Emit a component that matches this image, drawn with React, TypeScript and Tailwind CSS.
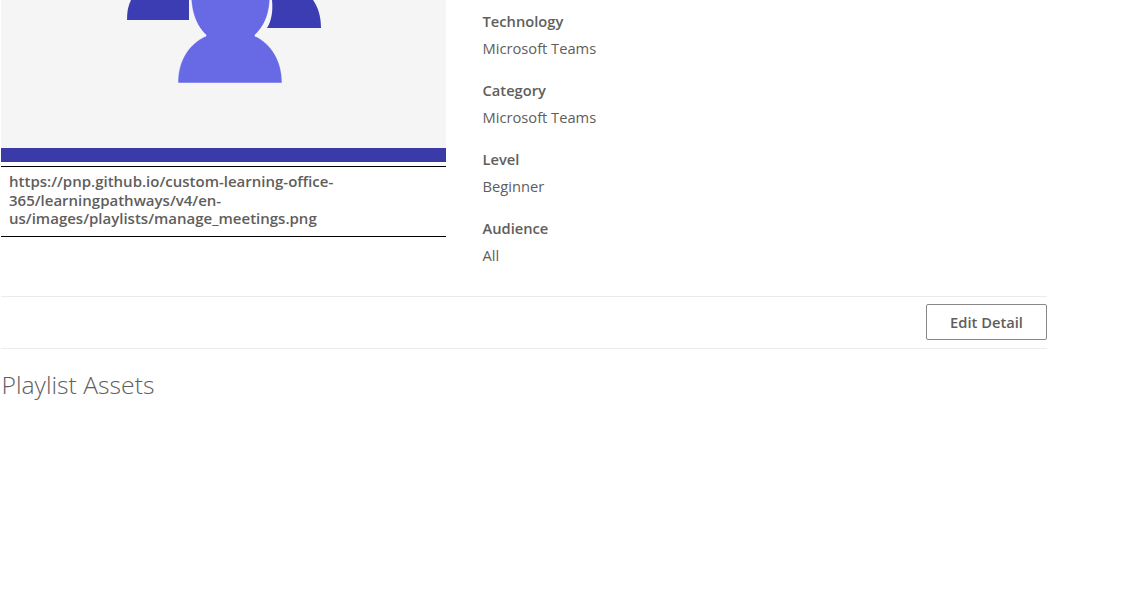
const font = "font-['Open_Sans','Noto_Sans',sans-serif]";

function DetailField({ label, value }: { label: string; value: string }) {
	return (
		<div className="mb-[17px]">
			<div className="h-[25px] text-[14.7px] leading-[25px] font-semibold text-[#605e5c]">{label}</div>
			<div className="h-[27px] pt-[2px] text-[14.7px] leading-[25px] text-[#605e5c]">{value}</div>
		</div>
	);
}

function PlaylistImage() {
	return (
		<svg width="445" height="162" viewBox="0 0 445 162" className="block">
			<rect width="445" height="148" fill="#f5f5f5" />
			<rect y="148" width="445" height="14" fill="#3a3aa8" />
			{/* back shoulders */}
			<path d="M126 20 C126 12 127 6 130 0 L188 0 L188 20 Z" fill="#3d3db3" />
			<path d="M266 28 L320 28 C320 16 317 7 312 0 L271 0 C272 10 271 20 266 28 Z" fill="#3d3db3" />
			{/* front person */}
			<path
				d="M190 -6 C190 14 197 28 205 36 C188 44 177 60 177 83 L281 83 C281 60 270 44 254 36 C263 28 269 14 269 -6 Z"
				fill="#676ae4"
				stroke="#ffffff"
				strokeOpacity="0.55"
				strokeWidth="0.8"
			/>
			<path d="M189 0 C189 14 196 28 205 36" fill="none" stroke="#f5f5f5" strokeWidth="2" />
			<path d="M270 0 C270 14 263 28 254 36" fill="none" stroke="#f5f5f5" strokeWidth="2" />
		</svg>
	);
}

export default function App() {
	return (
		<div className={`${font} h-[595px] w-[1129px] overflow-hidden bg-white pl-px`}>
			<div className="w-[1046px]">
				<div className="flex h-[297px] gap-[36.5px] border-b border-[#edebe9]">
					{/* Image + url caption */}
					<div className="w-[445px]">
						<PlaylistImage />
						<div className="mt-1 border-y border-black pt-[5px] pr-[100px] pb-[8.5px] pl-[8px] text-[15px] leading-[18.5px] font-semibold text-[#605e5c]">
							https://pnp.github.io/custom-learning-office-365/learningpathways/v4/en-us/images/playlists/manage_meetings.png
						</div>
					</div>

					{/* Details */}
					<div className="pt-[9px]">
						<DetailField label="Technology" value="Microsoft Teams" />
						<DetailField label="Category" value="Microsoft Teams" />
						<DetailField label="Level" value="Beginner" />
						<DetailField label="Audience" value="All" />
					</div>
				</div>

				<div className="flex h-[52px] items-start justify-end border-b border-[#edebe9] pt-[7px]">
					<button className="h-9 w-[121px] rounded-[2px] border border-[#8a8886] bg-white text-[14.7px] font-semibold text-[#605e5c]">
						Edit Detail
					</button>
				</div>

				<h2 className="mt-[18px] pl-[0.5px] text-[24.7px] leading-[36px] font-light text-[#605e5c]">Playlist Assets</h2>
			</div>
		</div>
	);
}
